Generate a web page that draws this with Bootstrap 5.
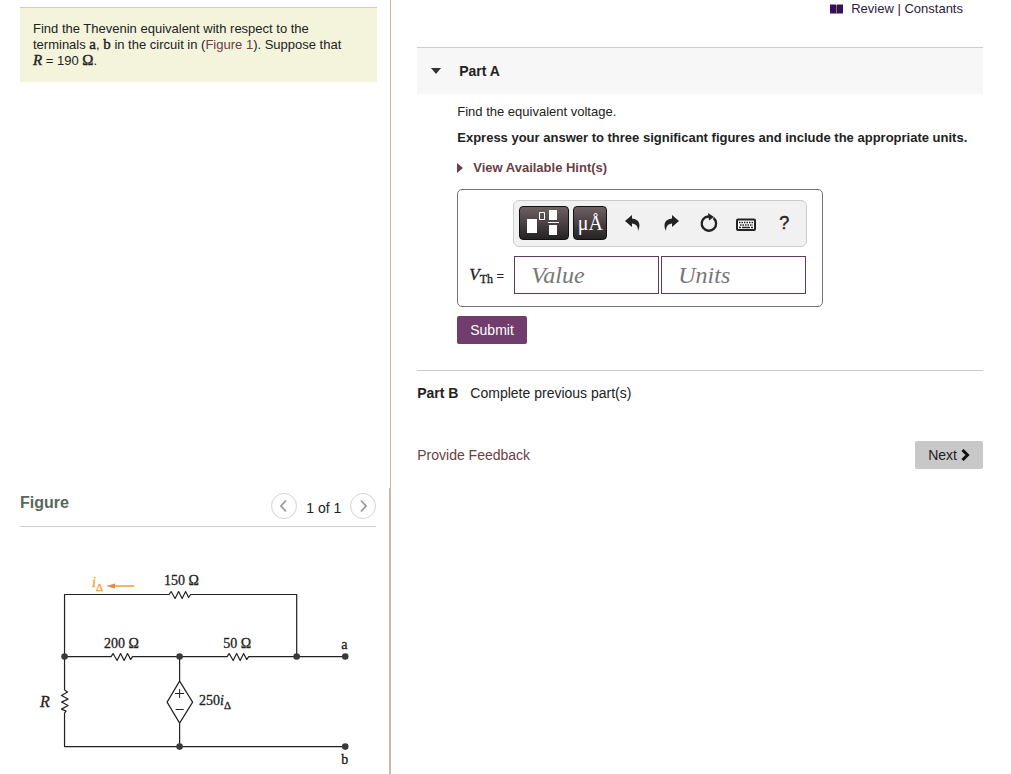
<!DOCTYPE html>
<html lang="en">
<head>
<meta charset="utf-8">
<meta name="viewport" content="width=device-width, initial-scale=1">
<title>Thevenin equivalent</title>
<link href="https://cdn.jsdelivr.net/npm/bootstrap@5.3.0/dist/css/bootstrap.min.css" rel="stylesheet">
<style>
  body { font: 13px/16px "Liberation Sans", Arial, sans-serif; color: #222; background: #fff; }
  a { color: #6a4046; text-decoration: none; }
  .math { font-family: "Liberation Serif", "Times New Roman", serif; }
  .fs-math { font-size: 15px; line-height: 14px; -webkit-text-stroke: .4px; }
  .fs-ui { font-size: 14px; }
  .side { flex: 0 0 38.7%; }
  .side-top { padding: 7px 13px 0 20px; border-right: 1px solid #c2b3a3; }
  .problem { background: #f4f4dc; border-top: 1px solid #ccc; padding: 13px 24px 13px 13px; }
  .figure-pane { padding: 5px 13px 0 20px; border-right: 2px solid #c9b8a8; }
  .figure-head { border-bottom: 1px solid #ccc; padding-bottom: 7px; }
  .figure-title { font-size: 16px; color: #56695a; }
  .pager { gap: 9px; }
  .round-btn { width: 26px; height: 26px; border: 1px solid #d4d4d4; border-radius: 50%; background: #fff; }
  .circuit { margin-top: 33px; width: 100%; height: auto; }
  .work { padding: 0 28px 0 26px; min-width: 0; }
  .review { padding-top: 1px; padding-right: 20px; margin-bottom: 30px; color: #2d2140; }
  .review a { color: inherit; }
  .part-head { background: #f7f7f7; border: 0; border-top: 1px solid #ccc; padding: 15px 14px; text-align: left; gap: 18px; color: #222; }
  .part-body { padding: 10px 0 26px 40px; border-bottom: 1px solid #ccc; }
  .question { margin-bottom: 10px; }
  .instruction { margin-bottom: 14px; }
  .hints { margin-bottom: 13px; }
  .answer { width: 366px; max-width: 100%; border: 1px solid #777; border-radius: 5px; padding: 10px 16px 12px 11px; }
  .answer-grid { display: grid; grid-template-columns: 45px 1fr; row-gap: 9px; align-items: center; }
  .tools { grid-column: 2; height: 47px; margin: 0 -1px; background: #f1f1f1; border: 1px solid #ccc; border-radius: 6px; padding: 0 10px 2px 5px; }
  .tool-dark { height: 34px; border: 1px solid #111; border-radius: 4px; background: linear-gradient(#6e6063, #252224); color: #fff; }
  .tool-symbol { width: 34px; font-size: 20px; }
  .tool-plain { width: 24px; height: 24px; border: 0; background: none; color: #222; }
  .tool-help { font-size: 18px; line-height: 20px; -webkit-text-stroke: .4px; }
  .field-row { gap: 2px; }
  .field { width: 50%; min-width: 0; height: 38px; border: 1px solid #5f3a5f; border-radius: 0; padding: 0 16px; font-size: 24px; font-style: italic; }
  .field::placeholder { color: #777; opacity: 1; }
  .var { font-size: 17px; -webkit-text-stroke: .3px; }
  .var sub { font-size: 12px; font-style: normal; }
  .flat-btn { height: 28px; border: 0; border-radius: 2px; padding: 0 13px; }
  .submit { background: #713d6c; color: #fff; margin-top: 9px; }
  .next { background: #c8c8c8; color: #222; }
  .part-b { padding-top: 14px; }
</style>
</head>
<body>
<div class="d-flex min-vh-100">
  <aside class="side d-flex flex-column">
    <div class="side-top flex-grow-1">
      <div class="problem">Find the Thevenin equivalent with respect to the terminals <span class="math fs-math">a</span>, <span class="math fs-math">b</span> in the circuit in (<a href="#figure">Figure 1</a>). Suppose that <i class="math fs-math">R</i> = 190 <span class="math fs-math">Ω</span>.</div>
    </div>
    <section class="figure-pane" id="figure">
      <div class="figure-head d-flex justify-content-between align-items-start">
        <h2 class="figure-title fw-bold m-0">Figure</h2>
        <div class="pager d-flex align-items-center fs-ui">
          <button class="round-btn p-0 d-flex align-items-center justify-content-center" type="button" aria-label="Previous figure"><svg width="12" height="14" viewBox="0 0 12 14" fill="none" stroke="#999" stroke-width="1.8"><path d="M8 1.500 3 7l5 5.500"/></svg></button>
          <span class="pt-1 lh-1">1 of 1</span>
          <button class="round-btn p-0 d-flex align-items-center justify-content-center" type="button" aria-label="Next figure"><svg width="12" height="14" viewBox="0 0 12 14" fill="none" stroke="#999" stroke-width="1.8"><path d="m4 1.500 5 5.500-5 5.500"/></svg></button>
        </div>
      </div>
      <svg class="circuit d-block math" viewBox="20 560 356 214" role="img" aria-label="Circuit diagram">
        <g fill="none" stroke="#222" stroke-width="1.2" stroke-linejoin="round">
          <path d="M64.500 690V594.500H169l2-3 4 7 3.500-7 3.500 7 3.500-7 3 6 2-3H296.500V656.500"/>
          <path d="M64.500 656.500H111l2-3 4 7 3.500-7 3.500 7 3.500-7 3 6 2-3H227l2-3 4 7 3.500-7 3.500 7 3.500-7 3 6 2-3H345"/>
          <path d="M64.500 690l3 2-6 3.500 6.500 3.500-6.500 3 6.500 3.500-6.500 3.500 4.500 2-1.500 2V746.500H345"/>
          <path d="M179.500 656.500V681l13 21-13 21V746.500M179.500 681l-12.500 21 12.500 21"/>
          <path d="M175 693.500h9M179.500 689v9M175.500 709.500h8" stroke-width="1"/>
        </g>
        <g fill="#3a3a3a"><circle cx="64.500" cy="656.500" r="3.300"/><circle cx="179.500" cy="656.500" r="3.300"/><circle cx="296.500" cy="656.500" r="3.300"/><circle cx="345" cy="656.500" r="3.300"/><circle cx="179.500" cy="746.500" r="3.300"/><circle cx="345" cy="746.500" r="3.300"/></g>
        <path d="M114 586h20" stroke="#f0a030" stroke-width="1.500"/><path d="M106 586l9-2.500v5z" fill="#e8883a"/>
        <g font-size="14" fill="#222" stroke="#222" stroke-width=".3">
          <text x="164" y="585">150 Ω</text><text x="104" y="648">200 Ω</text><text x="223" y="648">50 Ω</text>
          <text x="199" y="705">250<tspan font-style="italic">i</tspan><tspan font-size="11" dy="4">Δ</tspan></text>
          <text x="40" y="707" font-size="16" font-style="italic">R</text>
          <text x="341" y="649">a</text><text x="341" y="764">b</text>
          <text x="92" y="587" fill="#f0a030" stroke="#f0a030"><tspan font-style="italic">i</tspan><tspan font-size="11" dy="4">Δ</tspan></text>
        </g>
      </svg>
    </section>
  </aside>

  <main class="work flex-grow-1">
    <div class="review d-flex justify-content-end align-items-center">
      <svg class="me-2" width="13" height="12" viewBox="0 0 13 12"><path d="M0 1.500h6v9H0zM7 1.500h6v9H7z" fill="#32125f"/><path d="M6.500 2v9" stroke="#8d7a50"/></svg>
      <div><a href="#review">Review</a> | <a href="#constants">Constants</a></div>
    </div>
    <section>
      <button class="part-head w-100 d-flex align-items-center fs-ui fw-bold" type="button" aria-expanded="true"><svg width="10" height="6" viewBox="0 0 10 6"><path d="M0 0h10L5 6z" fill="#333"/></svg>Part A</button>
      <div class="part-body">
        <p class="question">Find the equivalent voltage.</p>
        <p class="instruction fw-bold">Express your answer to three significant figures and include the appropriate units.</p>
        <a class="hints d-flex align-items-center fw-bold gap-2" href="#hints"><svg width="8" height="10" viewBox="0 0 8 10"><path d="M0 0v10l6-5z" fill="#6a3d4e"/></svg>View Available Hint(s)</a>
        <form class="m-0">
          <div class="answer answer-grid">
            <div class="tools d-flex align-items-center justify-content-between">
              <div class="d-flex gap-1">
                <button class="tool-dark p-0" type="button" aria-label="Templates"><svg class="d-block" width="48" height="32" viewBox="0 0 48 32"><path d="M7 12h10v14H7zM29 3h8v10h-8zM29 18h8v10h-8zM28 15h11v1H28z" fill="#fff"/><path d="M19.500 5.500h5v7h-5z" fill="none" stroke="#fff"/></svg></button>
                <button class="tool-dark tool-symbol math p-0" type="button" aria-label="Symbols">μÅ</button>
              </div>
              <button class="tool-plain p-0" type="button" aria-label="Undo"><svg class="d-block" width="24" height="24" viewBox="0 0 24 24"><path d="M4 10 11 4v3.500C17.500 8 20.500 13 17 20 17 15 15 13 11 12.500V16z" fill="#222"/></svg></button>
              <button class="tool-plain p-0" type="button" aria-label="Redo"><svg class="d-block" width="24" height="24" viewBox="0 0 24 24"><path d="M20 10 13 4v3.500C6.500 8 3.500 13 7 20 7 15 9 13 13 12.500V16z" fill="#222"/></svg></button>
              <button class="tool-plain p-0" type="button" aria-label="Reset"><svg class="d-block" width="24" height="24" viewBox="0 0 24 24"><path d="M16.500 7A7.200 7.200 0 1 1 8 6.500Q10 5.500 12 5.500" fill="none" stroke="#222" stroke-width="2.300"/><path d="m11 2 6 4-5 3.500z" fill="#222"/></svg></button>
              <button class="tool-plain p-0" type="button" aria-label="Keyboard"><svg class="d-block" width="24" height="24" viewBox="0 0 24 24"><rect x="3" y="8.500" width="18" height="10.500" rx="1" fill="#fff" stroke="#222" stroke-width="2"/><path d="M5 11.500h14M6 14h13" stroke="#222" stroke-width="1.500" stroke-dasharray="1.500 1"/><path d="M5 16.500h2m1 0h8m1 0h2" stroke="#222" stroke-width="1.300"/></svg></button>
              <button class="tool-plain tool-help p-0" type="button" aria-label="Help">?</button>
            </div>
            <label class="text-nowrap" for="value"><i class="var math">V<sub>Th</sub></i> =</label>
            <div class="field-row d-flex">
              <input class="field math" id="value" type="text" placeholder="Value">
              <input class="field math" id="units" type="text" placeholder="Units" aria-label="Units">
            </div>
          </div>
          <button class="flat-btn submit fs-ui d-block" type="submit">Submit</button>
        </form>
      </div>
    </section>
    <section class="part-b fs-ui"><b class="me-2">Part B</b> Complete previous part(s)</section>
    <footer class="d-flex justify-content-between align-items-center fs-ui mt-4 pt-3">
      <a href="#feedback">Provide Feedback</a>
      <button class="flat-btn next d-flex align-items-center gap-1" type="button">Next <svg width="9" height="12" viewBox="0 0 9 12"><path d="m1.500 1 5 5-5 5" fill="none" stroke="#111" stroke-width="3"/></svg></button>
    </footer>
  </main>
</div>
<script src="https://cdn.jsdelivr.net/npm/bootstrap@5.3.0/dist/js/bootstrap.bundle.min.js"></script>
</body>
</html>
